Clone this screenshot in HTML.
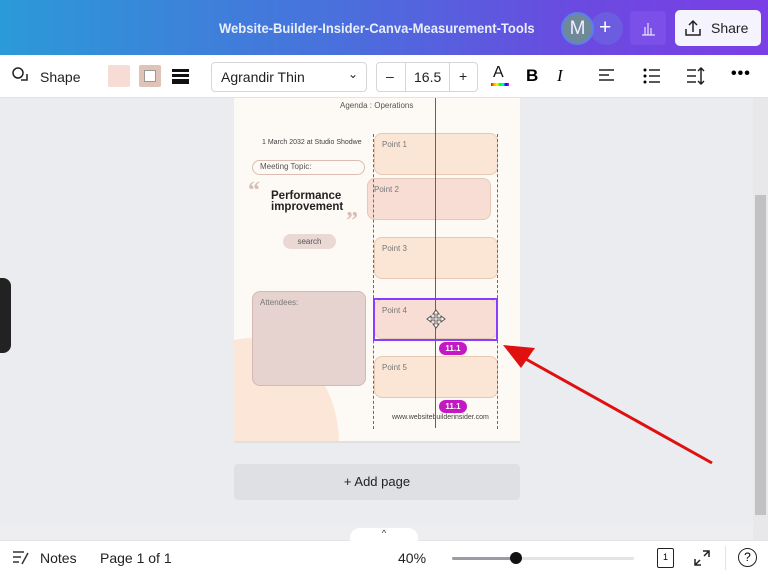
<!DOCTYPE html>
<html><head><meta charset="utf-8"><style>
*{box-sizing:border-box;margin:0;padding:0}
body{width:768px;height:575px;overflow:hidden;font-family:"Liberation Sans",sans-serif;background:#ebecf0;position:relative}
.abs{position:absolute}
#hdr{left:0;top:0;width:768px;height:55px;background:linear-gradient(90deg,#2b9ad8 0%,#4a6fdc 45%,#6a4ae0 75%,#7b3fe6 100%)}
#tb{left:0;top:55px;width:768px;height:43px;background:#fff;border-bottom:1px solid #e3e3e6}
.t{font-size:14px;color:#222}
.box{position:absolute;border-radius:8px;border:1.5px solid #e6c9b4}
.pt{font-size:8px;color:#777;position:absolute;left:7px;top:6px}
</style></head><body>
<div id="hdr" class="abs">
<div class="abs" style="left:219px;top:20px;color:#e8eefc;font-size:14px;font-weight:bold;white-space:nowrap;transform:scaleX(0.93);transform-origin:left">Website-Builder-Insider-Canva-Measurement-Tools</div>
<div class="abs" style="left:590px;top:12px;width:33px;height:33px;border-radius:50%;background:#6b5ce0"></div>
<div class="abs" style="left:561px;top:12px;width:33px;height:33px;border-radius:50%;background:#6e8a99;border:2px solid #5d7ef0;color:#eef;font-size:19px;text-align:center;line-height:29px">M</div>
<div class="abs" style="left:599px;top:16px;color:#fff;font-size:21px">+</div>
<div class="abs" style="left:630px;top:11px;width:36px;height:34px;border-radius:4px;background:#7a50e8"></div>
<svg class="abs" style="left:638px;top:18px" width="20" height="20"><path d="M4 17h13M7 17V9M10 17V5M13 17V10" stroke="#fff" fill="none"/></svg>
<div class="abs" style="left:675px;top:10px;width:86px;height:36px;border-radius:5px;background:#f5f3fd"></div>
<svg class="abs" style="left:683px;top:18px" width="20" height="20"><path d="M3 11v6h14v-6M10 14V3M6 7l4-4 4 4" stroke="#222" stroke-width="1.5" fill="none"/></svg>
<div class="abs" style="left:711px;top:20px;font-size:14px;color:#222">Share</div>
</div>
<div id="tb" class="abs">
<svg class="abs" style="left:12px;top:12px" width="18" height="18"><circle cx="6" cy="6" r="5" stroke="#222" fill="none" stroke-width="1.5"/><path d="M9 13h6V7" stroke="#222" fill="none" stroke-width="1.5"/></svg>
<div class="abs t" style="left:40px;top:14px">Shape</div>
<div class="abs" style="left:108px;top:10px;width:22px;height:22px;background:#f6dcd4;border-radius:2px"></div>
<div class="abs" style="left:139px;top:10px;width:22px;height:22px;background:#dfc3b9;border-radius:2px"><div style="margin:5px;width:12px;height:12px;background:#fff;border:1px solid #999"></div></div>
<div class="abs" style="left:172px;top:14px;width:17px;height:3px;background:#111"></div>
<div class="abs" style="left:172px;top:19px;width:17px;height:3px;background:#111"></div>
<div class="abs" style="left:172px;top:24px;width:17px;height:5px;background:#111"></div>
<div class="abs" style="left:211px;top:7px;width:156px;height:30px;border:1px solid #d5d5da;border-radius:4px"></div>
<div class="abs t" style="left:221px;top:14px">Agrandir Thin</div>
<div class="abs" style="left:348px;top:12px;font-size:12px;color:#222">&#8964;</div>
<div class="abs" style="left:376px;top:7px;width:102px;height:30px;border:1px solid #d5d5da;border-radius:4px"></div>
<div class="abs" style="left:405px;top:7px;width:45px;height:30px;border-left:1px solid #d5d5da;border-right:1px solid #d5d5da"></div>
<div class="abs t" style="left:386px;top:13px">–</div>
<div class="abs t" style="left:414px;top:14px">16.5</div>
<div class="abs t" style="left:459px;top:13px">+</div>
<div class="abs" style="left:493px;top:9px;font-size:16px;color:#111">A</div>
<div class="abs" style="left:491px;top:28px;width:18px;height:3px;background:linear-gradient(90deg,red,orange,yellow,lime,cyan,blue,magenta)"></div>
<div class="abs" style="left:526px;top:11px;font-size:17px;font-weight:bold">B</div>
<div class="abs" style="left:557px;top:11px;font-size:17px;font-style:italic;font-family:'Liberation Serif',serif">I</div>
<svg class="abs" style="left:598px;top:13px" width="18" height="16"><path d="M1 2h15M1 7h10M1 12h15" stroke="#222" stroke-width="1.5"/></svg>
<svg class="abs" style="left:643px;top:12px" width="18" height="18"><path d="M6 3h11M6 9h11M6 15h11" stroke="#222" stroke-width="1.5"/><circle cx="2" cy="3" r="1.5"/><circle cx="2" cy="9" r="1.5"/><circle cx="2" cy="15" r="1.5"/></svg>
<svg class="abs" style="left:686px;top:12px" width="20" height="18"><path d="M1 3h9M1 9h9M1 15h9M15 1v16M12 4l3-3 3 3M12 14l3 3 3-3" stroke="#222" stroke-width="1.5" fill="none"/></svg>
<div class="abs" style="left:731px;top:10px;font-size:16px;font-weight:bold;letter-spacing:1px">•••</div>
</div>
<div class="abs" style="left:753px;top:98px;width:15px;height:442px;background:#e8e8ea"></div>
<div class="abs" style="left:755px;top:195px;width:11px;height:320px;background:#c1c1c4"></div>
<div class="abs" style="left:0;top:525px;width:753px;height:15px;background:#eeeef0"></div>
<div class="abs" style="left:0;top:278px;width:11px;height:75px;background:#222;border-radius:0 8px 8px 0"></div>
<div class="abs" style="left:234px;top:98px;width:286px;height:343px;background:#fdf9f4;overflow:hidden">
<div class="abs" style="left:-70px;top:240px;width:175px;height:210px;border-radius:50%;background:#fbe6d7"></div>
<div class="abs" style="left:106px;top:3px;font-size:8px;color:#555">Agenda : Operations</div>
<div class="abs" style="left:28px;top:41px;font-size:7px;color:#444">1 March 2032 at Studio Shodwe</div>
<div class="abs" style="left:18px;top:62px;width:113px;height:15px;border:1.5px solid #dbbdb5;border-radius:8px;font-size:8px;color:#555;padding:1px 7px">Meeting Topic:</div>
<div class="abs" style="left:14px;top:80px;font-size:24px;color:#d9bdb5;font-weight:bold;font-family:'Liberation Serif',serif">“</div>
<div class="abs" style="left:112px;top:110px;font-size:24px;color:#d9bdb5;font-weight:bold;font-family:'Liberation Serif',serif">”</div>
<div class="abs" style="left:37px;top:93px;font-size:11.5px;font-weight:bold;color:#222;line-height:11px">Performance<br>improvement</div>
<div class="abs" style="left:49px;top:136px;width:53px;height:15px;background:#ead8d5;border-radius:8px;font-size:8px;color:#555;text-align:center;line-height:15px">search</div>
<div class="box" style="left:18px;top:193px;width:114px;height:95px;background:#e6d2cf;border-color:#d4b8b3"><span class="pt">Attendees:</span></div>
<div class="box" style="left:140px;top:35px;width:124px;height:42px;background:#fbe6d6"><span class="pt">Point 1</span></div>
<div class="box" style="left:133px;top:80px;width:124px;height:42px;background:#f7ddd4"><span class="pt" style="left:6px">Point 2</span></div>
<div class="box" style="left:140px;top:139px;width:124px;height:42px;background:#fbe6d6"><span class="pt">Point 3</span></div>
<div class="box" style="left:140px;top:201px;width:124px;height:40px;background:#f7ddd4"><span class="pt">Point 4</span></div>
<div class="box" style="left:140px;top:258px;width:124px;height:42px;background:#fbe6d6"><span class="pt">Point 5</span></div>
<div class="abs" style="left:158px;top:316px;font-size:7px;color:#444">www.websitebuilderinsider.com</div>
<div class="abs" style="left:139px;top:200px;width:125px;height:43px;border:2px solid #8b3dff"></div>
<div class="abs" style="left:139px;top:36px;height:295px;border-left:1px dashed #c02ccf"></div>
<div class="abs" style="left:263px;top:36px;height:295px;border-left:1px dashed #c02ccf"></div>
<div class="abs" style="left:201px;top:0;height:330px;border-left:1px solid #b026c8"></div>
<div class="abs" style="left:205px;top:244px;width:28px;height:13px;background:#c418c4;border-radius:7px;color:#fff;font-size:8px;font-weight:bold;text-align:center;line-height:13px">11.1</div>
<div class="abs" style="left:205px;top:302px;width:28px;height:13px;background:#c418c4;border-radius:7px;color:#fff;font-size:8px;font-weight:bold;text-align:center;line-height:13px">11.1</div>
<svg class="abs" style="left:192px;top:211px" width="20" height="20"><path d="M10 1l3 4h-2v4h4V7l4 3-4 3v-2h-4v4h2l-3 4-3-4h2v-4H5v2l-4-3 4-3v2h4V5H7z" fill="#fff" stroke="#555"/></svg>
</div>
<div class="abs" style="left:234px;top:441px;width:286px;height:2px;background:#e0e0e3"></div>
<svg class="abs" style="left:495px;top:335px" width="225" height="135"><path d="M217 128L20 18" stroke="#e01010" stroke-width="3"/><path d="M8 10l32 3-14 20z" fill="#e01010"/></svg>
<div class="abs" style="left:234px;top:464px;width:286px;height:36px;background:#dfe0e4;border-radius:4px;font-size:13px;color:#222;text-align:center;line-height:36px">+ Add page</div>
<div class="abs" style="left:0;top:540px;width:768px;height:35px;background:#fff;border-top:1px solid #e3e3e6"></div>
<div class="abs" style="left:350px;top:528px;width:68px;height:14px;background:#fff;border-radius:10px 10px 0 0;text-align:center;font-size:9px;color:#333">^</div>
<svg class="abs" style="left:12px;top:549px" width="20" height="18"><path d="M1 3h11M1 8h8M1 13h6M16 4l-6 11" stroke="#333" stroke-width="1.5"/></svg>
<div class="abs t" style="left:40px;top:550px">Notes</div>
<div class="abs t" style="left:100px;top:550px">Page 1 of 1</div>
<div class="abs t" style="left:398px;top:550px">40%</div>
<div class="abs" style="left:452px;top:557px;width:182px;height:3px;background:#e3e4e8;border-radius:2px"></div>
<div class="abs" style="left:452px;top:557px;width:64px;height:3px;background:#9a9ca3;border-radius:2px"></div>
<div class="abs" style="left:510px;top:552px;width:12px;height:12px;border-radius:50%;background:#111"></div>
<div class="abs" style="left:657px;top:548px;width:17px;height:20px;border:1.5px solid #222;border-radius:2px;font-size:9px;text-align:center;line-height:17px;background:#fff">1</div>
<svg class="abs" style="left:693px;top:549px" width="18" height="18"><path d="M10 2h6v6M16 2l-5 5M8 16H2v-6M2 16l5-5" stroke="#222" stroke-width="1.5" fill="none"/></svg>
<div class="abs" style="left:725px;top:546px;height:24px;border-left:1px solid #e3e3e6"></div>
<div class="abs" style="left:738px;top:548px;width:19px;height:19px;border:1.5px solid #222;border-radius:50%;font-size:12px;text-align:center;line-height:17px">?</div>
</body></html>
